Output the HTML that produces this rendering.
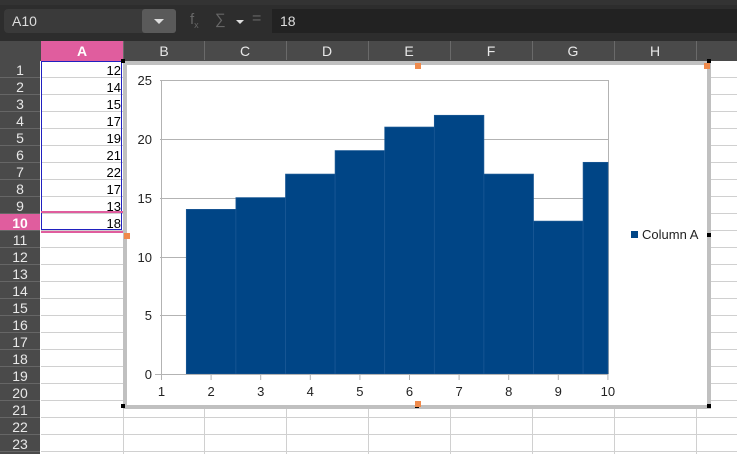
<html><head><style>
body{margin:0;width:737px;height:454px;overflow:hidden;background:#fff;font-family:"Liberation Sans",sans-serif;position:relative}
.a{position:absolute}
</style></head><body>
<div class="a" style="left:0;top:0;width:737px;height:41px;background:#2d2d2d"></div>
<div class="a" style="left:0;top:0;width:737px;height:5px;background:#333"></div>
<div class="a" style="left:4px;top:9px;width:172px;height:24px;background:#3a3a3a;border-radius:4px"></div>
<div class="a" style="left:12px;top:13px;color:#ddd;font-size:14px">A10</div>
<div class="a" style="left:142px;top:9px;width:34px;height:24px;background:#5a5a5a;border-radius:3px"></div>
<div class="a" style="left:154px;top:19px;width:0;height:0;border-left:5px solid transparent;border-right:5px solid transparent;border-top:5px solid #ddd"></div>
<div class="a" style="left:190px;top:11px;color:#666;font-size:15px">f<sub style="font-size:9px">x</sub></div>
<div class="a" style="left:215px;top:11px;color:#666;font-size:15px">∑</div>
<div class="a" style="left:236px;top:20px;border-left:4px solid transparent;border-right:4px solid transparent;border-top:4px solid #ddd"></div>
<div class="a" style="left:252px;top:10px;color:#666;font-size:16px">=</div>
<div class="a" style="left:272px;top:9px;width:465px;height:24px;background:#222"></div>
<div class="a" style="left:280px;top:13px;color:#ddd;font-size:14px">18</div>
<!-- column headers -->
<div class="a" style="left:0;top:41px;width:737px;height:20px;background:#4a4a4a"></div>
<div class="a" style="left:41px;top:41px;width:82px;height:20px;background:#e05d9e"></div>
<div id="ch"></div>
<!-- row headers -->
<div class="a" style="left:0;top:61px;width:40px;height:393px;background:#4a4a4a"></div>
<div class="a" style="left:0;top:214px;width:40px;height:17px;background:#e05d9e"></div>
<svg class="a" style="left:0;top:0" width="737" height="454">
<g stroke="#6a6a6a" stroke-width="1">
<line x1="123.5" y1="41" x2="123.5" y2="60"/><line x1="204.5" y1="41" x2="204.5" y2="60"/><line x1="286.5" y1="41" x2="286.5" y2="60"/><line x1="368.5" y1="41" x2="368.5" y2="60"/><line x1="450.5" y1="41" x2="450.5" y2="60"/><line x1="532.5" y1="41" x2="532.5" y2="60"/><line x1="614.5" y1="41" x2="614.5" y2="60"/><line x1="696.5" y1="41" x2="696.5" y2="60"/>
</g>
<g fill="#e8e8e8" font-size="14" text-anchor="middle">
<text x="82" y="56" fill="#fff" font-weight="bold">A</text><text x="164" y="56">B</text><text x="245" y="56">C</text><text x="327" y="56">D</text><text x="409" y="56">E</text><text x="491" y="56">F</text><text x="573" y="56">G</text><text x="655" y="56">H</text>
</g>
<g id="grid" stroke="#d0d0d0" stroke-width="1"></g>
<g id="rh" fill="#e8e8e8" font-size="14" text-anchor="middle"></g>
<g id="vals" font-size="13" text-anchor="end" fill="#000"></g>
<rect x="41.5" y="61.5" width="80" height="168" fill="none" stroke="#2020c0"/>
<line x1="41" y1="212" x2="123" y2="212" stroke="#e05d9e" stroke-width="2"/>
<line x1="41" y1="232" x2="123" y2="232" stroke="#e05d9e" stroke-width="2"/>
<!-- chart -->
<rect x="125" y="63" width="584" height="344" fill="#fff" stroke="#c0c0c0" stroke-width="4"/>
<g stroke="#b3b3b3">
<line x1="160" y1="80.5" x2="608" y2="80.5"/><line x1="160" y1="139.5" x2="608" y2="139.5"/><line x1="160" y1="198.5" x2="608" y2="198.5"/><line x1="160" y1="257.5" x2="608" y2="257.5"/><line x1="160" y1="315.5" x2="608" y2="315.5"/>
<line x1="608.5" y1="80" x2="608.5" y2="374"/>
</g>
<g fill="#004586" stroke="#1d5a96" stroke-width="0.7" id="bars"></g>
<g stroke="#b3b3b3">
<line x1="155" y1="374.5" x2="608" y2="374.5"/><line x1="161.5" y1="80" x2="161.5" y2="380"/>
</g>
<g id="ticks" stroke="#b3b3b3"></g>
<g font-size="13" fill="#222" text-anchor="end">
<text x="152" y="85">25</text><text x="152" y="144">20</text><text x="152" y="203">15</text><text x="152" y="262">10</text><text x="152" y="320">5</text><text x="152" y="379">0</text>
</g>
<g id="xl" font-size="13" fill="#222" text-anchor="middle"></g>
<rect x="631" y="231" width="7" height="7" fill="#004586"/>
<text x="642" y="239" font-size="13" fill="#222">Column A</text>
<g fill="#000"><rect x="121" y="59" width="4" height="4"/><rect x="121" y="404" width="4" height="4"/><rect x="415" y="404" width="4" height="4"/><rect x="707" y="59" width="4" height="4"/><rect x="707" y="233" width="4" height="4"/><rect x="707" y="404" width="4" height="4"/></g>
<g fill="#f08a4b"><rect x="415" y="63" width="6" height="6"/><rect x="124" y="233" width="6" height="6"/><rect x="704" y="63" width="6" height="6"/><rect x="415" y="401" width="6" height="6"/></g>
</svg>
<script>
var g=document.getElementById('grid'),rh=document.getElementById('rh'),v=document.getElementById('vals'),ns='http://www.w3.org/2000/svg';
function el(p,t,a,tx){var e=document.createElementNS(ns,t);for(var k in a)e.setAttribute(k,a[k]);if(tx!=null)e.textContent=tx;p.appendChild(e);}
for(var i=1;i<=24;i++){var y=61+i*17-0.5;el(g,'line',{x1:41,y1:y,x2:737,y2:y});el(rh,'line',{x1:0,y1:y,x2:40,y2:y,stroke:'#666'});}
[123,204,286,368,450,532,614,696].forEach(function(x){el(g,'line',{x1:x+.5,y1:61,x2:x+.5,y2:454});});
for(var i=1;i<=23;i++){el(rh,'text',{x:20,y:61+i*17-3,fill:i==10?'#fff':'#e8e8e8','font-weight':i==10?'bold':'normal'},i);}
[12,14,15,17,19,21,22,17,13,18].forEach(function(d,i){el(v,'text',{x:121,y:61+(i+1)*17-3},d);});
var b=document.getElementById('bars'),x0=161.5,s=49.6,z=374,u=11.76;
[14,15,17,19,21,22,17,13,18].forEach(function(d,i){var xl=x0+(i+0.5)*s,xr=Math.min(xl+s,608);el(b,'rect',{x:xl,y:z-d*u,width:xr-xl,height:d*u});});
var t=document.getElementById('ticks'),xl=document.getElementById('xl');
for(var i=1;i<=10;i++){var x=x0+(i-1)*s;el(t,'line',{x1:x,y1:374,x2:x,y2:380});el(xl,'text',{x:x,y:396},i);}
</script>
</body></html>
